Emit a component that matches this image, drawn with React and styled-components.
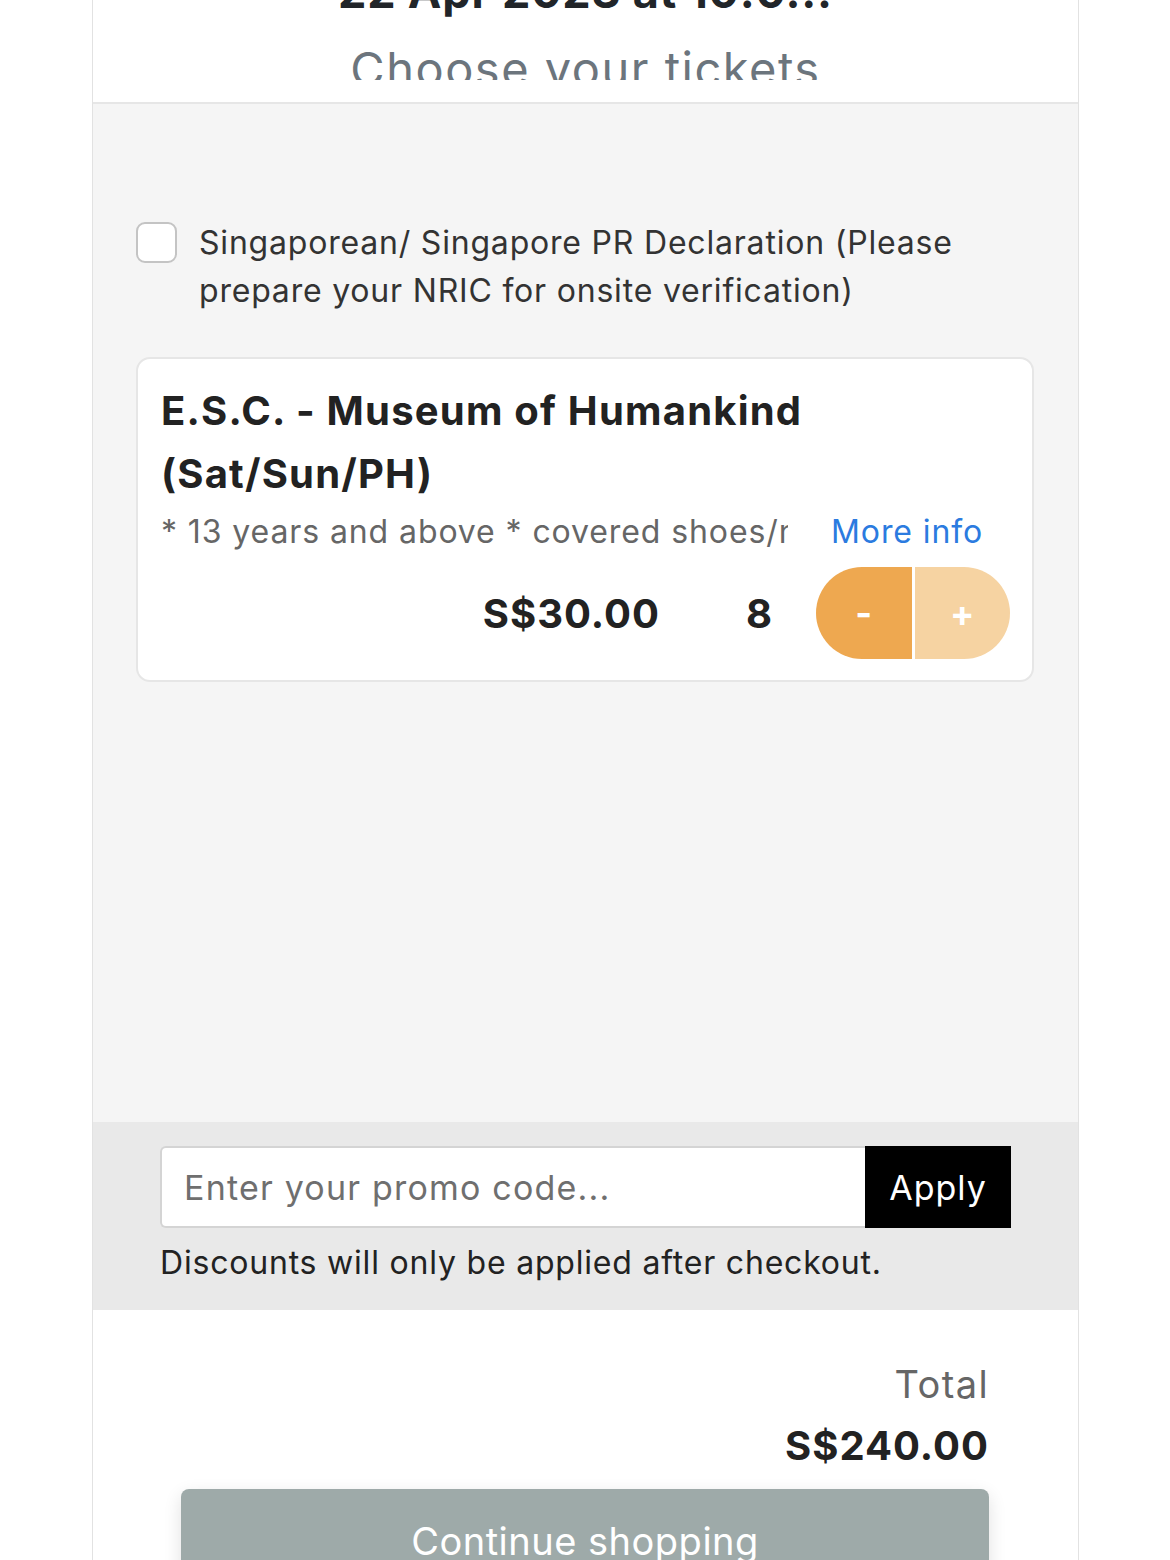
import styled, { createGlobalStyle } from "styled-components"

const GlobalStyle = createGlobalStyle`
  html, body {
    margin: 0;
    padding: 0;
    background: #ffffff;
  }
  body {
    font-family: Inter, "Noto Sans", "Liberation Sans", sans-serif;
    color: #212529;
    overflow: hidden;
  }
  * { box-sizing: border-box; }
`

const Page = styled.div`
  width: 1170px;
  height: 1560px;
  overflow: hidden;
  padding-left: 92px;
`

const Panel = styled.div`
  width: 987px;
  min-height: 1560px;
  border-left: 1.5px solid #e2e2e2;
  border-right: 1.5px solid #e2e2e2;
  display: flex;
  flex-direction: column;
`

const Header = styled.header`
  background: #fff;
  height: 104px;
  border-bottom: 2px solid #e6e6e6;
  display: flex;
  flex-direction: column;
`

const HeaderClip = styled.div`
  height: 80px;
  overflow: hidden;
  text-align: center;
`

const EventDate = styled.h1`
  margin: -30px 0 0;
  font-size: 45px;
  line-height: 44px;
  font-weight: 700;
  letter-spacing: 0.8px;
  color: #212529;
`

const Subtitle = styled.h2`
  margin: 29px 0 0;
  font-size: 47px;
  line-height: 52px;
  font-weight: 400;
  letter-spacing: 1.5px;
  color: #6c757d;
`

const Body = styled.main`
  background: #f5f5f5;
  height: 1018px;
  padding: 115px 44px 0 43px;
`

const CheckRow = styled.label`
  display: flex;
  align-items: flex-start;
  gap: 22px;
  font-size: 32px;
  letter-spacing: 0.8px;
  line-height: 48px;
  color: #333;
`

const CheckBox = styled.span`
  flex: none;
  width: 41px;
  height: 41px;
  margin-top: 3px;
  border: 2px solid #c4c4c4;
  border-radius: 9px;
  background: #fff;
`

const Card = styled.section`
  margin-top: 42px;
  background: #fff;
  border: 2px solid #e6e6e6;
  border-radius: 14px;
  padding: 20px 22px 21px 23px;
`

const CardTitle = styled.h3`
  margin: 0;
  font-size: 40px;
  line-height: 63px;
  font-weight: 700;
  color: #222;
  letter-spacing: 1.2px;
`

const InfoRow = styled.div`
  margin-top: 3px;
  display: flex;
  align-items: center;
  font-size: 32px;
  letter-spacing: 0.9px;
  line-height: 48px;
`

const Desc = styled.span`
  flex: none;
  width: 627px;
  overflow: hidden;
  white-space: nowrap;
  color: #666;
`

const MoreInfo = styled.a`
  margin-left: 43px;
  color: #2b7be0;
  text-decoration: none;
  white-space: nowrap;
`

const PriceRow = styled.div`
  margin-top: 11px;
  display: flex;
  justify-content: flex-end;
  align-items: center;
`

const Price = styled.span`
  font-size: 40px;
  font-weight: 700;
  letter-spacing: 1px;
  color: #222;
`

const Qty = styled.span`
  margin-left: 86px;
  margin-right: 44px;
  font-size: 40px;
  font-weight: 700;
  color: #222;
`

const Stepper = styled.div`
  display: flex;
  height: 92px;
  width: 194px;
  border-radius: 46px;
  overflow: hidden;
`

const StepButton = styled.button`
  flex: 1;
  border: none;
  padding: 0;
  background: ${(p) => (p.$light ? "#f6d3a2" : "#eea850")};
  color: #fff;
  font-family: inherit;
  font-size: 36px;
  font-weight: 700;
  border-left: ${(p) => (p.$light ? "3px solid #fff" : "none")};
`

const Promo = styled.section`
  background: #e9e9e9;
  height: 188px;
  padding: 24px 67px 0;
`

const PromoForm = styled.div`
  display: flex;
  height: 82px;
`

const PromoInput = styled.input`
  flex: 1;
  min-width: 0;
  border: 2px solid #d4d4d4;
  border-right: none;
  border-radius: 6px 0 0 6px;
  background: #fff;
  padding: 0 22px;
  font-family: inherit;
  font-size: 34px;
  letter-spacing: 1.2px;
  color: #333;
  &::placeholder { color: #6f6f6f; }
`

const ApplyButton = styled.button`
  width: 146px;
  border: none;
  background: #000;
  color: #fff;
  font-family: inherit;
  font-size: 34px;
  letter-spacing: 1px;
`

const Note = styled.p`
  margin: 13px 0 0;
  font-size: 32px;
  letter-spacing: 0.8px;
  line-height: 44px;
  color: #222;
`

const Summary = styled.section`
  background: #fff;
  flex: 1;
  padding: 47px 89px 0 88px;
  display: flex;
  flex-direction: column;
  align-items: flex-end;
`

const TotalLabel = styled.span`
  font-size: 38px;
  line-height: 54px;
  letter-spacing: 1.4px;
  color: #666;
`

const TotalValue = styled.span`
  margin-top: 8px;
  font-size: 40px;
  line-height: 54px;
  font-weight: 700;
  letter-spacing: 1px;
  color: #222;
`

const ContinueButton = styled.button`
  margin-top: 16px;
  width: 808px;
  height: 110px;
  border: none;
  border-radius: 8px;
  background: #9eaaa9;
  color: #fff;
  font-family: inherit;
  font-size: 38px;
  letter-spacing: 0.5px;
  padding: 0;
  display: flex;
  justify-content: center;
  align-items: flex-start;
  line-height: 104px;
  box-shadow: 0 6px 18px rgba(0, 0, 0, 0.12);
`

export default function App() {
  return (
    <Page>
      <GlobalStyle />
      <Panel>
        <Header>
          <HeaderClip>
            <EventDate>22 Apr 2023 at 10:0...</EventDate>
            <Subtitle>Choose your tickets</Subtitle>
          </HeaderClip>
        </Header>

        <Body>
          <CheckRow>
            <CheckBox />
            <span>Singaporean/ Singapore PR Declaration (Please prepare your NRIC for onsite verification)</span>
          </CheckRow>

          <Card>
            <CardTitle>E.S.C. - Museum of Humankind (Sat/Sun/PH)</CardTitle>
            <InfoRow>
              <Desc>* 13 years and above * covered shoes/needed</Desc>
              <MoreInfo href="#">More info</MoreInfo>
            </InfoRow>
            <PriceRow>
              <Price>S$30.00</Price>
              <Qty>8</Qty>
              <Stepper>
                <StepButton>-</StepButton>
                <StepButton $light>+</StepButton>
              </Stepper>
            </PriceRow>
          </Card>
        </Body>

        <Promo>
          <PromoForm>
            <PromoInput placeholder="Enter your promo code..." />
            <ApplyButton>Apply</ApplyButton>
          </PromoForm>
          <Note>Discounts will only be applied after checkout.</Note>
        </Promo>

        <Summary>
          <TotalLabel>Total</TotalLabel>
          <TotalValue>S$240.00</TotalValue>
          <ContinueButton>Continue shopping</ContinueButton>
        </Summary>
      </Panel>
    </Page>
  )
}
